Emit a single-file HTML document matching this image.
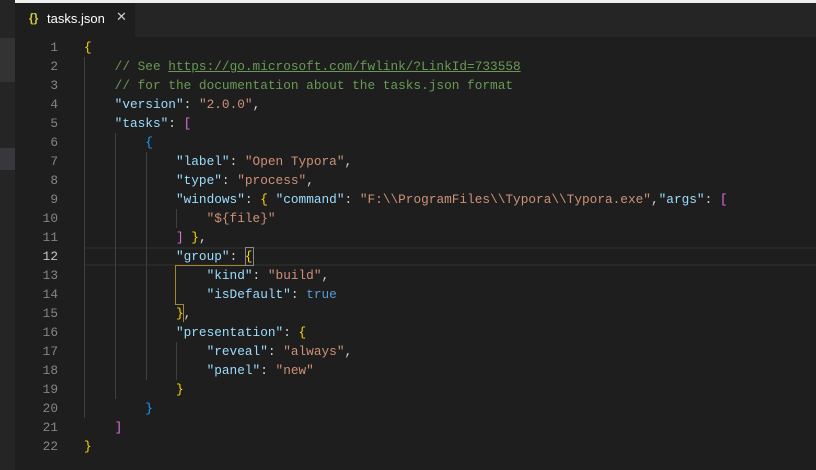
<!DOCTYPE html>
<html><head><meta charset="utf-8"><style>
*{margin:0;padding:0;box-sizing:border-box}
body{width:816px;height:470px;background:#1e1e1e;position:relative;overflow:hidden;font-family:"Liberation Mono",monospace;}
.abs{position:absolute}
.ln{position:absolute;left:15px;width:43px;text-align:right;color:#858585;font-size:12.77px;line-height:19px;height:19px}
.code{position:absolute;left:84px;font-size:12.77px;line-height:19px;height:19px;white-space:pre;color:#d4d4d4}
.k{color:#9cdcfe}.s{color:#ce9178}.c{color:#6a9955}.g{color:#ffd700}.p{color:#da70d6}.b{color:#179fff}.kw{color:#569cd6}
.u{text-decoration:underline}
.gd{position:absolute;width:1px;background:#404040}
</style></head><body>
<div class="abs" style="left:15px;top:0;width:801px;height:3px;background:#efefef"></div>
<div class="abs" style="left:15px;top:3px;width:801px;height:34px;background:#252526"></div>
<div class="abs" style="left:0;top:0;width:15px;height:470px;background:#252526"></div>
<div class="abs" style="left:0;top:38px;width:15px;height:44px;background:#333333"></div>
<div class="abs" style="left:0;top:148px;width:15px;height:22px;background:#37373d"></div>
<div class="abs" style="left:15px;top:3px;width:120px;height:34px;background:#1e1e1e"></div>
<div class="abs" style="left:29px;top:11px;font-family:'Liberation Sans',sans-serif;font-size:12px;font-weight:bold;color:#cbcb41">{}</div>
<div class="abs" style="left:47px;top:11px;font-family:'Liberation Sans',sans-serif;font-size:13px;color:#fff">tasks.json</div>
<div class="abs" style="left:116px;top:10px;font-family:'DejaVu Sans',sans-serif;font-size:13px;color:#ccc">✕</div>
<div class="abs" style="left:84px;top:247px;width:732px;height:19px;border-top:2px solid #282828;border-bottom:2px solid #282828"></div>
<div class="gd" style="left:84px;top:57px;height:361px"></div>
<div class="gd" style="left:115px;top:133px;height:266px"></div>
<div class="gd" style="left:146px;top:152px;height:228px"></div>
<div class="gd" style="left:176px;top:209px;height:19px"></div>
<div class="gd" style="left:176px;top:342px;height:38px"></div>
<div class="abs" style="left:175px;top:265px;width:71px;height:1px;background:#a08a30"></div>
<div class="abs" style="left:175px;top:265px;width:1px;height:40px;background:#a08a30"></div>
<div class="abs" style="left:175px;top:304px;width:8px;height:1px;background:#a08a30"></div>
<div class="abs" style="left:183px;top:304px;width:1px;height:18px;background:#a08a30"></div>
<div class="abs" style="left:245px;top:247px;width:9px;height:19px;border:1px solid #888"></div>
<div class="ln" style="top:38px">1</div><div class="ln" style="top:57px">2</div><div class="ln" style="top:76px">3</div><div class="ln" style="top:95px">4</div><div class="ln" style="top:114px">5</div><div class="ln" style="top:133px">6</div><div class="ln" style="top:152px">7</div><div class="ln" style="top:171px">8</div><div class="ln" style="top:190px">9</div><div class="ln" style="top:209px">10</div><div class="ln" style="top:228px">11</div><div class="ln" style="top:247px;color:#c6c6c6">12</div><div class="ln" style="top:266px">13</div><div class="ln" style="top:285px">14</div><div class="ln" style="top:304px">15</div><div class="ln" style="top:323px">16</div><div class="ln" style="top:342px">17</div><div class="ln" style="top:361px">18</div><div class="ln" style="top:380px">19</div><div class="ln" style="top:399px">20</div><div class="ln" style="top:418px">21</div><div class="ln" style="top:437px">22</div>
<div class="code" style="top:38px"><span class="g">{</span></div>
<div class="code" style="top:57px">    <span class="c">// See <span class="u">https://go.microsoft.com/fwlink/?LinkId=733558</span></span></div>
<div class="code" style="top:76px">    <span class="c">// for the documentation about the tasks.json format</span></div>
<div class="code" style="top:95px">    <span class="k">"version"</span>: <span class="s">"2.0.0"</span>,</div>
<div class="code" style="top:114px">    <span class="k">"tasks"</span>: <span class="p">[</span></div>
<div class="code" style="top:133px">        <span class="b">{</span></div>
<div class="code" style="top:152px">            <span class="k">"label"</span>: <span class="s">"Open Typora"</span>,</div>
<div class="code" style="top:171px">            <span class="k">"type"</span>: <span class="s">"process"</span>,</div>
<div class="code" style="top:190px">            <span class="k">"windows"</span>: <span class="g">{</span> <span class="k">"command"</span>: <span class="s">"F:\\ProgramFiles\\Typora\\Typora.exe"</span>,<span class="k">"args"</span>: <span class="p">[</span></div>
<div class="code" style="top:209px">                <span class="s">"${file}"</span></div>
<div class="code" style="top:228px">            <span class="p">]</span> <span class="g">}</span>,</div>
<div class="code" style="top:247px">            <span class="k">"group"</span>: <span class="g">{</span></div>
<div class="code" style="top:266px">                <span class="k">"kind"</span>: <span class="s">"build"</span>,</div>
<div class="code" style="top:285px">                <span class="k">"isDefault"</span>: <span class="kw">true</span></div>
<div class="code" style="top:304px">            <span class="g">}</span>,</div>
<div class="code" style="top:323px">            <span class="k">"presentation"</span>: <span class="g">{</span></div>
<div class="code" style="top:342px">                <span class="k">"reveal"</span>: <span class="s">"always"</span>,</div>
<div class="code" style="top:361px">                <span class="k">"panel"</span>: <span class="s">"new"</span></div>
<div class="code" style="top:380px">            <span class="g">}</span></div>
<div class="code" style="top:399px">        <span class="b">}</span></div>
<div class="code" style="top:418px">    <span class="p">]</span></div>
<div class="code" style="top:437px"><span class="g">}</span></div>
</body></html>
